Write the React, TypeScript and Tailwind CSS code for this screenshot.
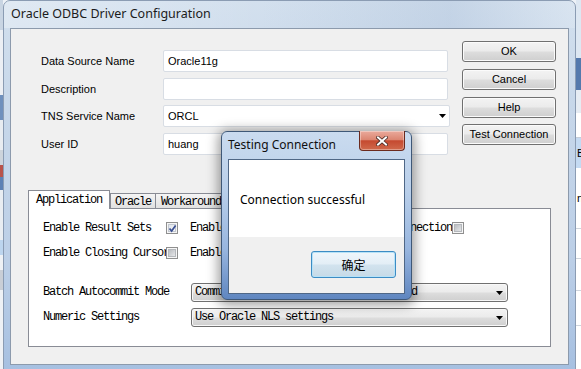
import React from 'react';

const mono =
  "font-['Liberation_Mono','DejaVu_Sans_Mono',monospace] text-[12px] tracking-[-1.2px] leading-[13px] whitespace-nowrap text-black";

const Arrow = () => (
  <svg width="7" height="4" viewBox="0 0 7 4">
    <path d="M0 0h7L3.5 4z" fill="#000" />
  </svg>
);

const CheckBox = ({ checked = false }: { checked?: boolean }) => (
  <div className="relative z-10 flex h-[12px] w-[12px] shrink-0 items-center justify-center border border-[#8f8f8f] bg-[#f6f6f6]">
    <div
      className={
        checked
          ? 'h-[8px] w-[8px] border border-[#c3c8d0] bg-[linear-gradient(135deg,#dfe4ea,#f7f8fa)]'
          : 'h-[8px] w-[8px] border border-[#b5b8bc] bg-[linear-gradient(135deg,#b9bcc0,#e6e7e9)]'
      }
    />
    {checked && (
      <svg className="absolute left-[1px] top-[1px]" width="9" height="9" viewBox="0 0 9 9">
        <path d="M1.5 4.5L3.6 7L7.6 1.5" fill="none" stroke="#3a4f92" strokeWidth="1.7" />
      </svg>
    )}
  </div>
);

const WinButton = ({ label, className = '' }: { label: string; className?: string }) => (
  <div
    className={`flex h-[21px] w-[94px] items-center justify-center rounded-[3px] border border-[#707070] bg-[linear-gradient(#f3f3f3_0%,#ebebeb_48%,#dddddd_52%,#cfcfcf_100%)] shadow-[inset_0_0_0_1px_#fbfbfb] text-[11px] text-black ${className}`}
  >
    {label}
  </div>
);

const Drop = ({ text }: { text: string }) => (
  <div className="flex h-[19px] w-[317px] items-center justify-between rounded-[3px] border border-[#707070] bg-[linear-gradient(#f3f3f3_0%,#ebebeb_48%,#dddddd_52%,#cfcfcf_100%)] pl-[3px] pr-[4px] shadow-[inset_0_0_0_1px_#f8f8f8]">
    <span className={mono}>{text}</span>
    <Arrow />
  </div>
);

const FormRow = ({ label, children, className = '' }: { label: string; children: React.ReactNode; className?: string }) => (
  <div className={`flex h-[22px] items-center ${className}`}>
    <span className="w-[122px] shrink-0 text-[11px] text-black">{label}</span>
    {children}
  </div>
);

const TextBox = ({ value = '', w = 'w-[285px]' }: { value?: string; w?: string }) => (
  <div className={`flex h-[22px] items-center rounded-[2px] border border-[#d8dde4] bg-white pl-[4px] text-[11px] text-black ${w}`}>
    {value}
  </div>
);

const App = () => {
  return (
    <div className="relative h-[369px] w-[581px] overflow-hidden bg-[#eef2f7] font-['Liberation_Sans',Arial,sans-serif]">
      {/* background window scraps, left */}
      <div className="absolute left-0 top-0 flex h-full w-[3px] flex-col">
        <div className="h-[30px] bg-[#c9d5e3]" />
        <div className="h-[65px] bg-[#eceff4]" />
        <div className="h-[25px] bg-[#6f90bd]" />
        <div className="h-[30px] bg-[#e8ecf1]" />
        <div className="h-[15px] bg-[#cdd4dc]" />
        <div className="h-[12px] bg-[#b9534b]" />
        <div className="h-[13px] bg-[#5d81b5]" />
        <div className="h-[50px] bg-[#e9edf2]" />
        <div className="h-[15px] bg-[#bdd5ee]" />
        <div className="h-[15px] bg-[#eef1f5]" />
        <div className="h-[20px] bg-[#c9ced6]" />
        <div className="flex-1 bg-[#eef1f5]" />
      </div>
      {/* background window scraps, right */}
      <div className="absolute right-0 top-0 flex h-full w-[5px] flex-col">
        <div className="h-[58px] bg-[#dde7f2]" />
        <div className="h-[32px] bg-[#5479ad]" />
        <div className="h-[23px] bg-[#e6ecf3]" />
        <div className="h-[25px] border-b border-[#c5cdd8] bg-white" />
        <div className="h-[30px] overflow-hidden bg-[#c4daf2] pl-[1px] text-[11px] leading-[30px] text-black">B</div>
        <div className="h-[60px] overflow-hidden bg-white pl-[1px] text-[11px] leading-[60px] text-black">n</div>
        <div className="h-[30px] border-t border-[#cfd5dd] bg-white" />
        <div className="h-[32px] border-t border-[#cfd5dd] bg-white" />
        <div className="h-[35px] border-t border-[#cfd5dd] bg-white" />
        <div className="flex-1 border-t border-[#cfd5dd] bg-white" />
      </div>

      {/* main window */}
      <div className="absolute left-[3px] top-0 flex h-[372px] w-[573px] flex-col rounded-t-[7px] border border-[#8b9cb3] bg-[linear-gradient(180deg,#d3e0ee_0%,#c8d8ea_25%,#bccfe7_70%,#a6c0e1_100%)]">
        <div className="flex h-[27px] items-center rounded-t-[6px] bg-[linear-gradient(90deg,rgba(255,255,255,0.3),rgba(255,255,255,0)_45%,rgba(140,165,200,0.2)_78%,rgba(255,255,255,0.15))] pl-[7px] font-['Noto_Sans','Open_Sans',sans-serif] text-[12.5px] text-[#1b1b1b]">
          Oracle ODBC Driver Configuration
        </div>
        <div className="mx-[6px] flex h-[337px] flex-col border border-[#8c9aac] bg-[#f0f0f0]">
          <div className="flex h-[161px]">
            <div className="flex w-[451px] flex-col pl-[30px] pt-[21px]">
              <FormRow label="Data Source Name">
                <TextBox value="Oracle11g" />
              </FormRow>
              <FormRow label="Description" className="mt-[6px]">
                <TextBox />
              </FormRow>
              <FormRow label="TNS Service Name" className="mt-[5px]">
                <div className="flex h-[22px] w-[287px] items-center justify-between rounded-[2px] border border-[#d8dde4] bg-white pl-[4px] pr-[3px] text-[11px] text-black">
                  ORCL
                  <Arrow />
                </div>
              </FormRow>
              <FormRow label="User ID" className="mt-[6px]">
                <TextBox value="huang" />
              </FormRow>
            </div>
            <div className="flex flex-col pt-[12px]">
              <WinButton label="OK" />
              <WinButton label="Cancel" className="mt-[7px]" />
              <WinButton label="Help" className="mt-[7px]" />
              <WinButton label="Test Connection" className="mt-[6px]" />
            </div>
          </div>

          {/* tabs */}
          <div className="ml-[17px] w-[523px]">
            <div className="flex h-[19px] items-end">
              <div className={`relative z-10 flex h-[19px] w-[82px] items-center border border-b-0 border-[#898c95] bg-white pl-[7px] ${mono}`}>
                Application
              </div>
              <div className={`mb-[1px] flex h-[15px] w-[46px] items-center border border-b-0 border-[#898c95] bg-[linear-gradient(#f5f5f5,#e1e1e1)] pl-[4px] pt-[2px] ${mono}`}>
                Oracle
              </div>
              <div className={`mb-[1px] flex h-[15px] w-[72px] items-center border border-b-0 border-l-0 border-[#898c95] bg-[linear-gradient(#f5f5f5,#e1e1e1)] pl-[5px] pt-[2px] ${mono}`}>
                Workaround
              </div>
              <div className={`mb-[1px] flex h-[15px] w-[56px] items-center border border-b-0 border-l-0 border-[#898c95] bg-[linear-gradient(#f5f5f5,#e1e1e1)] pl-[5px] pt-[2px] ${mono}`}>
                SQLServer
              </div>
            </div>
            <div className="-mt-px flex h-[139px] flex-col border border-[#898c95] bg-white pl-[14px] pt-[13px]">
              <div className="flex h-[12px] items-center">
                <span className={`w-[123px] shrink-0 ${mono}`}>Enable Result Sets</span>
                <CheckBox checked />
                <span className={`ml-[12px] w-[122px] shrink-0 ${mono}`}>Enable Query Timeout</span>
                <CheckBox checked />
                <span className={`ml-[8px] w-[120px] shrink-0 ${mono}`}>Read-Only Connection</span>
                <CheckBox />
              </div>
              <div className="mt-[13px] flex h-[12px] items-center">
                <span className={`w-[123px] shrink-0 ${mono}`}>Enable Closing Cursors</span>
                <CheckBox />
                <span className={`ml-[12px] w-[122px] shrink-0 ${mono}`}>Enable Thread Safety</span>
                <CheckBox checked />
              </div>
              <div className="mt-[24px] flex h-[19px] items-center">
                <span className={`w-[148px] shrink-0 ${mono}`}>Batch Autocommit Mode</span>
                <Drop text="Commit only if all statements succeed" />
              </div>
              <div className="mt-[6px] flex h-[19px] items-center">
                <span className={`w-[148px] shrink-0 ${mono}`}>Numeric Settings</span>
                <Drop text="Use Oracle NLS settings" />
              </div>
            </div>
          </div>
        </div>
      </div>

      {/* Testing Connection message box */}
      <div className="absolute left-[221px] top-[131px] z-20 flex h-[169px] w-[191px] flex-col rounded-[6px] border border-[#3f5877] bg-[linear-gradient(180deg,#cadbef_0%,#b9cfea_35%,#98b6df_70%,#5f86c0_100%)] px-[6px] pb-[5px] shadow-[0_2px_12px_3px_rgba(0,0,0,0.38)]">
        <div className="flex h-[27px] items-start">
          <span className="self-center pb-[2px] font-['Noto_Sans','Open_Sans',sans-serif] text-[12px] text-[#101010]">
            Testing Connection
          </span>
          <div className="-mt-px ml-auto flex h-[20px] w-[46px] items-center justify-center rounded-b-[4px] border border-t-0 border-[#6b2a1e] bg-[linear-gradient(#eaaa9c_0%,#dc8672_45%,#c54a30_52%,#d06a4c_100%)] shadow-[inset_0_0_0_1px_rgba(255,255,255,0.35)]">
            <svg width="12" height="10" viewBox="0 0 12 10">
              <path d="M2 1.5L10 8.5M10 1.5L2 8.5" stroke="#4a2a24" strokeWidth="3.6" strokeLinecap="square" />
              <path d="M2 1.5L10 8.5M10 1.5L2 8.5" stroke="#ffffff" strokeWidth="2" strokeLinecap="square" />
            </svg>
          </div>
        </div>
        <div className="flex h-[135px] flex-col border border-[#4f6786]">
          <div className="h-[77px] bg-white pl-[11px] pt-[32px] font-['Noto_Sans','Open_Sans',sans-serif] text-[12px] leading-[16px] text-black">
            Connection successful
          </div>
          <div className="flex flex-1 justify-end bg-[#f0f0f0] pr-[8px] pt-[14px]">
            <div className="flex h-[27px] w-[85px] items-center justify-center rounded-[3px] border border-[#3c8cc4] bg-[linear-gradient(#eff6fb_0%,#e3eef6_48%,#d2e3ee_52%,#c6dae7_100%)] shadow-[inset_0_0_0_1px_#b7e2f7] font-['Noto_Sans_CJK_SC',sans-serif] text-[12px] text-black">
              确定
            </div>
          </div>
        </div>
      </div>
    </div>
  );
};

export default App;
